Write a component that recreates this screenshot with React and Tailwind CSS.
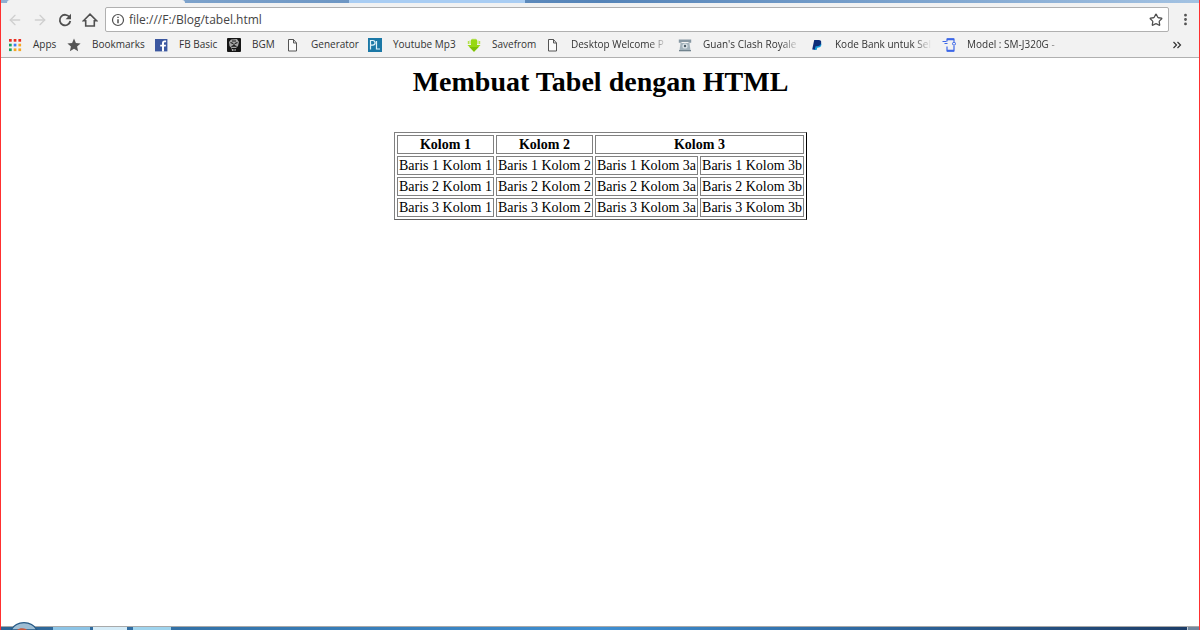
import { ArrowLeft, ArrowRight, EllipsisVertical, Star } from 'lucide-react'

const AppsIcon = () => {
  const colors = ['#ea2c20', '#ea2c20', '#ea2c20', '#16a05d', '#3f7df5', '#f5a623', '#16a05d', '#f5a623', '#f5a623']
  return (
    <svg viewBox="0 0 14 14" className="size-3.5">
      {colors.map((color, i) => (
        <rect key={i} x={1 + (i % 3) * 4.7} y={1 + Math.floor(i / 3) * 4.7} width="2.7" height="2.7" fill={color} />
      ))}
    </svg>
  )
}

const StarIcon = () => (
  <svg viewBox="0 0 14 14" className="size-3.5">
    <path d="M7 .6l1.9 4.3 4.7.5-3.5 3.1 1 4.7L7 10.8l-4.1 2.4 1-4.7L.4 5.4l4.7-.5z" fill="#555" />
  </svg>
)

const FacebookIcon = () => (
  <svg viewBox="0 0 14 14" className="size-3.5">
    <rect x="1" y="1" width="12.4" height="12.4" fill="#3b57a0" />
    <path d="M8 13.4V8.600H6.200V6.700H8V5.200c0-1.800 1-2.700 2.600-2.700h1.500v1.800h-1c-.9 0-1.100.4-1.100 1.100v1.300h2l-.3 1.900H10v4.800z" fill="#fff" />
  </svg>
)

const BgmIcon = () => (
  <svg viewBox="0 0 14 14" className="size-3.5">
    <rect width="14" height="14" rx="1" fill="#161616" />
    <path d="M4 1.500L10 1l2 3-1 4-2 2-.5 3H5l-.5-3-2-2L2 4z" fill="#a8a8a8" />
    <path d="M3.500 4.500l2.500 1M10.500 4.500l-2.500 1M5 3h4M4.500 8.500l2.500-1 2.500 1M7 5.500v1.500M5 10.500h4M6 12h2" stroke="#161616" strokeWidth="1.100" />
  </svg>
)

const FileIcon = () => (
  <svg viewBox="0 0 14 14" className="size-3.5" fill="none" stroke="#555" strokeWidth="1">
    <path d="M2.500 1.500h5l3 3.500v8h-8z" fill="#fafafa" />
    <path d="M7.500 1.500v3.500h3" />
  </svg>
)

const PlIcon = () => (
  <svg viewBox="0 0 14 14" className="size-3.5">
    <rect width="14" height="14" fill="#1b78a6" />
    <path d="M2.500 11.500v-9h2.200a2.300 2.300 0 0 1 0 4.700H3M8.500 3v8h3.500" fill="none" stroke="#dff1f8" strokeWidth="1.200" />
  </svg>
)

const SavefromIcon = () => (
  <svg viewBox="0 0 14 14" className="size-3.5">
    <path d="M4 1.600h1.500V.8h1v.8h1V.8h1v.8H10V7h3.500L7 13.800.5 7H4z" fill="#97d810" />
    <path d="M.8 3h1.300v3H.8zM2.600 2.400h.9V6h-.9zM11.900 3h1.300v3h-1.300zM10.500 2.400h.9V6h-.9z" fill="#b5e04f" />
    <path d="M2.400 9h9.200L7 13.800z" fill="#7cc005" />
  </svg>
)

const PhoneSetIcon = () => (
  <svg viewBox="0 0 14 14" className="size-3.5">
    <path d="M.8 1.500h12.400v3.200h-2.700V4h-7v.7H.8z" fill="#8798a3" />
    <path d="M2.500 5h9l1 7.500h-11z" fill="#a3b3bc" />
    <path d="M1 12h12v1.300H1z" fill="#71838e" />
    <circle cx="7" cy="8" r="2.600" fill="#dce5e9" />
    <circle cx="7" cy="8" r="1.200" fill="#4a5b66" />
  </svg>
)

const PaypalIcon = () => (
  <svg viewBox="0 0 14 14" className="size-3.5">
    <path d="M4.500 4.500h6c1.200.9 1.100 2 .6 3.300-.7 1.500-2 1.900-3.800 1.900L6.600 12H3.500z" fill="#179bd7" />
    <path d="M4.200 2h4.500c2 0 2.900 1.200 2.400 3.200-.5 2.200-2 3-4.200 3H5.600L4.800 11.500H2.200z" fill="#0c2d7a" />
  </svg>
)

const PhoneIcon = () => (
  <svg viewBox="0 0 14 14" className="size-3.5" fill="none" stroke="#3b66e8">
    <path d="M5 3.500V1.200h7v2.500M12 8v5H5V8.500" strokeWidth="1.200" />
    <path d="M5 1.300h7M5 12.700h7" strokeWidth="2" />
    <path d="M.5 3.500h4M2.500 5.500h3" strokeWidth="1" />
    <circle cx="12" cy="5.700" r="1.500" />
  </svg>
)

const bookmarks = [
  { label: 'Apps', icon: AppsIcon, width: 'w-6' },
  { label: 'Bookmarks', icon: StarIcon, width: 'w-[52px]' },
  { label: 'FB Basic', icon: FacebookIcon, width: 'w-[38px]' },
  { label: 'BGM', icon: BgmIcon, width: 'w-6' },
  { label: 'Generator', icon: FileIcon, width: 'w-[47px]' },
  { label: 'Youtube Mp3', icon: PlIcon, width: 'w-16' },
  { label: 'Savefrom', icon: SavefromIcon, width: 'w-11' },
  { label: 'Desktop Welcome P', icon: FileIcon, width: 'w-[97px]', fade: true },
  { label: "Guan's Clash Royale", icon: PhoneSetIcon, width: 'w-[97px]', fade: true },
  { label: 'Kode Bank untuk Sel', icon: PaypalIcon, width: 'w-[97px]', fade: true },
  { label: 'Model : SM-J320G -', icon: PhoneIcon, width: 'w-[97px]', fade: true },
]

const rows = [1, 2, 3]
const columns = ['1', '2', '3a', '3b']

function TabStrip() {
  return (
    <div className="flex h-[3px] bg-linear-to-r from-[#8fb0d4] via-[#5584b8] to-[#a3c2e2]">
      <div className="ml-1.5 w-[178px] rounded-t-sm bg-[#f2f2f2]" />
      <div className="ml-[164px] w-[176px] bg-[#a9cdf3]" />
    </div>
  )
}

function AddressBar() {
  return (
    <div className="flex items-center gap-[7px] pt-1 pl-1.5 text-[#505050]">
      <div className="flex items-center gap-[9px]">
        <button aria-label="Back" className="text-[#cfcfcf]"><ArrowLeft size={16} strokeWidth={2} /></button>
        <button aria-label="Forward" className="text-[#cfcfcf]"><ArrowRight size={16} strokeWidth={2} /></button>
        <button aria-label="Reload">
          <svg viewBox="0 0 16 16" className="size-4" fill="none" stroke="currentColor" strokeWidth="1.800">
            <path d="M12.600 5.300A5.300 5.300 0 1 0 13.300 9" />
            <path d="M14 1.800v5.400H8.600z" fill="currentColor" stroke="none" />
          </svg>
        </button>
        <button aria-label="Home">
          <svg viewBox="0 0 16 16" className="size-4" fill="none" stroke="currentColor" strokeWidth="1.600">
            <path d="M1.500 8.700L8 2.200l6.500 6.500h-2.200V14H3.700V8.700z" />
          </svg>
        </button>
      </div>
      <div className="flex h-[25px] min-w-0 flex-1 items-center rounded-xs border border-[#b0b0b0] bg-white px-[5px]">
        <svg viewBox="0 0 14 14" className="size-3.5 shrink-0" fill="none" stroke="currentColor">
          <circle cx="7" cy="7" r="5.500" strokeWidth="1.200" />
          <path d="M7 6.200v4M7 3.700v1.400" strokeWidth="1.500" />
        </svg>
        <input
          type="text"
          aria-label="Address"
          defaultValue="file:///F:/Blog/tabel.html"
          className="ml-1 min-w-0 flex-1 text-xs text-[#444] outline-none"
        />
        <button aria-label="Bookmark this page"><Star size={14} strokeWidth={2.200} /></button>
      </div>
      <button aria-label="Menu" className="mr-1.5 ml-0.5 text-[#505050]"><EllipsisVertical size={15} strokeWidth={2.500} /></button>
    </div>
  )
}

function BookmarksBar() {
  return (
    <nav className="flex h-[25px] items-center gap-2.5 pl-[7px] text-[10px] text-[#333]">
      {bookmarks.map(({ label, icon: Icon, width, fade }) => (
        <a key={label} href="#" className="flex shrink-0 items-center gap-[11px]">
          <Icon />
          <span className={`${width} whitespace-nowrap ${fade ? 'mask-r-from-80% mask-r-to-100%' : ''}`}>
            {label}
          </span>
        </a>
      ))}
      <button aria-label="More bookmarks" className="mr-[17px] ml-auto text-[#333]">
        <svg viewBox="0 0 10 8" className="h-2 w-2.5" fill="none" stroke="currentColor" strokeWidth="1.200">
          <path d="M1.500 1l3 3-3 3M5.500 1l3 3-3 3" />
        </svg>
      </button>
    </nav>
  )
}

function Taskbar() {
  return (
    <footer className="relative flex h-1 border-t border-[#a9a9a9] bg-linear-to-r from-[#2e6595] via-[#3f8fd2] to-[#1c3c66]">
      <svg viewBox="0 0 28 8" className="absolute bottom-0 left-[9px] h-2 w-7">
        <path d="M1 8C4 3 8 .7 14 .7S24 3 27 8z" fill="#9dbdd4" stroke="#275a86" strokeWidth="1.300" />
        <path d="M7 8c2-2 6-2.500 9-1l1 1z" fill="#c8583c" />
      </svg>
      <div className="ml-[52px] w-[37px] bg-[#8cc4e6]" />
      <div className="ml-[3px] w-[34px] bg-[#d5ecf8]" />
      <div className="ml-[6px] w-[38px] bg-[#9fd4ee]" />
      <div className="ml-auto w-3 border-l border-[#c0cad4] bg-[#70879e]" />
    </footer>
  )
}

export default function App() {
  return (
    <div className="flex min-h-screen flex-col border-x border-[#ff3030] bg-white font-['Open_Sans',sans-serif]">
      <header className="border-b border-[#b0b0b0] bg-[#f2f2f2]">
        <TabStrip />
        <AddressBar />
        <BookmarksBar />
      </header>

      <main className="flex flex-1 flex-col items-center pl-px font-['Liberation_Serif',serif] text-black">
        <h1 className="mt-2 text-[28px] leading-8 font-bold">Membuat Tabel dengan HTML</h1>
        <table className="mt-[34px] border-separate border-spacing-[2px] border border-t-[#808080] border-r-black border-b-[#606060] border-l-[#808080] text-[14px] leading-[15px]">
          <thead>
            <tr>
              <th className="border border-[#808080] p-px">Kolom 1</th>
              <th className="border border-[#808080] p-px">Kolom 2</th>
              <th colSpan={2} className="border border-[#808080] p-px">Kolom 3</th>
            </tr>
          </thead>
          <tbody>
            {rows.map((row) => (
              <tr key={row}>
                {columns.map((col) => (
                  <td key={col} className="border border-[#808080] p-px whitespace-nowrap">
                    Baris {row} Kolom {col}
                  </td>
                ))}
              </tr>
            ))}
          </tbody>
        </table>
      </main>

      <Taskbar />
    </div>
  )
}
